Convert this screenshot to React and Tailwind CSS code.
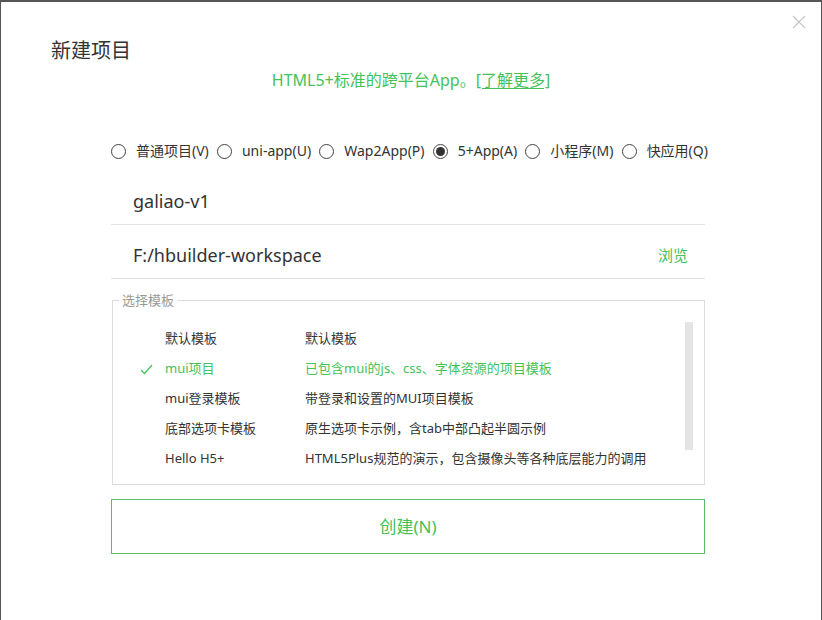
import React from "react";

const font = { fontFamily: '"Noto Sans", "Noto Sans CJK SC", sans-serif' };

function Radio({ label, checked }) {
  return (
    <label className="flex items-center gap-[10px] text-[14px] text-[#333] leading-none">
      <span className="w-[15px] h-[15px] rounded-full border border-[#444] flex items-center justify-center bg-white">
        {checked && <span className="w-[9px] h-[9px] rounded-full bg-[#333]" />}
      </span>
      <span>{label}</span>
    </label>
  );
}

const rows = [
  ["默认模板", "默认模板", false],
  ["mui项目", "已包含mui的js、css、字体资源的项目模板", true],
  ["mui登录模板", "带登录和设置的MUI项目模板", false],
  ["底部选项卡模板", "原生选项卡示例，含tab中部凸起半圆示例", false],
  ["Hello H5+", "HTML5Plus规范的演示，包含摄像头等各种底层能力的调用", false],
];

export default function App() {
  return (
    <div
      style={font}
      className="w-[822px] h-[620px] bg-white border-t-2 border-x border-[#555] relative overflow-hidden"
    >
      <svg className="absolute right-[15px] top-[13px]" width="14" height="14" viewBox="0 0 14 14">
        <path d="M1 1 L13 13 M13 1 L1 13" stroke="#c4c4c4" strokeWidth="1.1" fill="none" />
      </svg>

      <div className="pt-[35px] pl-[50px] text-[20px] leading-[28px] text-[#333]">新建项目</div>

      <div className="mt-[4px] text-center text-[16px] leading-[22px] text-[#45c15a]">
        HTML5+标准的跨平台App。<span className="underline underline-offset-2">[了解更多]</span>
      </div>

      <div className="mx-[110px] w-[597px]">
        <div className="mt-[50px] flex items-center justify-between h-[20px]">
          <Radio label="普通项目(V)" />
          <Radio label="uni-app(U)" />
          <Radio label="Wap2App(P)" />
          <Radio label="5+App(A)" checked />
          <Radio label="小程序(M)" />
          <Radio label="快应用(Q)" />
        </div>
      </div>

      <div className="mx-[110px] w-[594px]">
        <div className="mt-[10px] h-[54px] pt-[8px] flex items-center pl-[22px] border-b border-[#e3e3e3] text-[18px] text-[#333]">
          galiao-v1
        </div>
        <div className="h-[54px] pt-[8px] flex items-center justify-between pl-[22px] pr-[17px] border-b border-[#e3e3e3] text-[18px] text-[#333]">
          <span>F:/hbuilder-workspace</span>
          <span className="text-[15px] text-[#45c15a]">浏览</span>
        </div>

        <div className="mt-[21px] ml-[1px] w-[593px] h-[185px] border border-[#dcdcdc] relative flex">
          <span className="absolute -top-[10px] left-[6px] px-[3px] bg-white text-[13px] leading-[18px] text-[#999]">
            选择模板
          </span>
          <div className="flex-1 pt-[23px]">
            {rows.map(([a, b, sel]) => (
              <div
                key={a}
                className={`h-[30px] flex items-center text-[13px] ${sel ? "text-[#45c15a]" : "text-[#333]"}`}
              >
                <span className="w-[52px] flex justify-end pr-[12px]">
                  {sel && (
                    <svg width="13" height="11" viewBox="0 0 13 11">
                      <path d="M1 6 L4.5 9.5 L12 1" stroke="#45c15a" strokeWidth="1.2" fill="none" />
                    </svg>
                  )}
                </span>
                <span className="w-[140px]">{a}</span>
                <span>{b}</span>
              </div>
            ))}
          </div>
          <div className="w-[8px] mr-[11px] pt-[21px]">
            <div className="h-[128px] bg-[#e4e4e4]" />
          </div>
        </div>

        <button className="mt-[14px] w-[594px] h-[55px] border border-[#5cbd68] flex items-center justify-center text-[17px] text-[#45c15a] bg-white">
          创建(N)
        </button>
      </div>
    </div>
  );
}
